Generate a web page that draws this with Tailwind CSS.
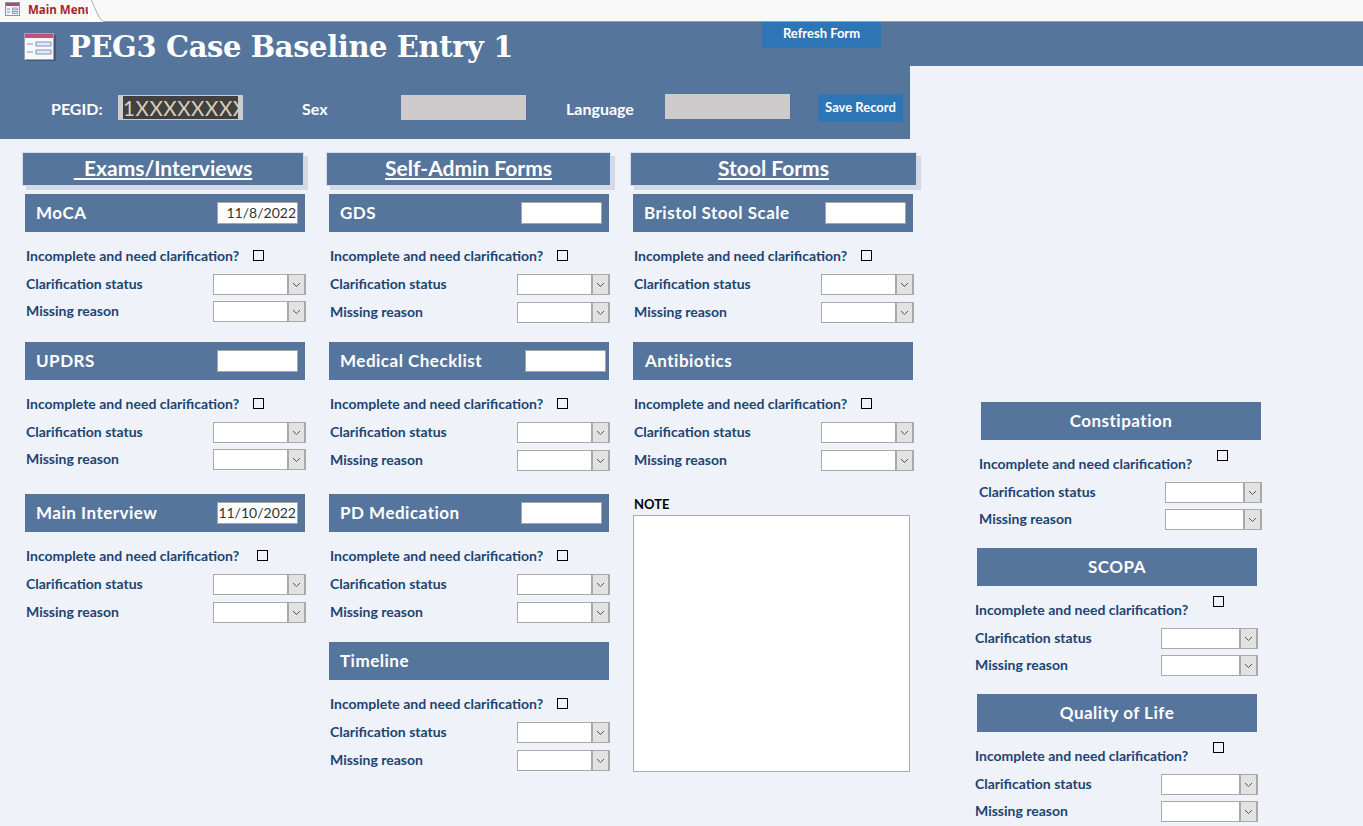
<!DOCTYPE html>
<html lang="en">

<head>
  <title>PEG3 Case Baseline Entry 1</title>
  <meta charset="UTF-8">
  <meta name="viewport" content="width=device-width, initial-scale=1">
  <script src="https://cdn.jsdelivr.net/npm/@tailwindcss/browser@4"></script>
</head>

<body class="bg-[#eff2f8] font-['Lato',sans-serif] h-[826px] overflow-hidden">
  <!-- tab strip -->
  <div class="h-[22px] bg-[#f8f8f8] border-b border-[#a0a0a0] flex relative">
    <svg class="absolute left-[5px] top-[2px]" width="15" height="14" viewBox="0 0 15 14">
      <rect x="0.5" y="0.5" width="14" height="13" fill="#f4f6fb" stroke="#8a93a8" />
      <rect x="1" y="1" width="13" height="3" fill="#b5476c" />
      <path d="M2 7h3M2 10h3" stroke="#7d8aa5" />
      <rect x="7.5" y="6" width="5" height="2" fill="#dce4f2" stroke="#6f80a5" stroke-width="0.7" />
      <rect x="7.5" y="9.5" width="5" height="2" fill="#dce4f2" stroke="#6f80a5" stroke-width="0.7" />
    </svg>
    <span class="ml-[28px] mt-[3px] text-[11.5px] leading-[14px] font-bold text-[#a4262c] font-['Open_Sans',sans-serif]">Main Menu</span>
    <svg class="absolute left-[88px] top-0" width="16" height="22" viewBox="0 0 16 22">
      <path d="M0 0h3C6 4 9 17 15 21.5H0z" fill="#fff" />
      <path d="M3 0C6 4 9 17 15 21.5" fill="none" stroke="#a8a8a8" />
    </svg>
    <div class="absolute left-0 top-[21px] w-[103px] h-px bg-white"></div>
  </div>

  <!-- title band -->
  <div class="h-[44px] bg-[#56759d] flex">
    <div class="w-[762px] shrink-0 flex">
      <svg class="ml-[24px] mt-[11px]" width="32" height="28" viewBox="0 0 32 28">
        <rect x="2" y="2" width="30" height="26" fill="#39455f" opacity="0.6" />
        <rect x="0.5" y="0.5" width="29" height="26" fill="#f7f8fc" stroke="#9aa3b5" />
        <rect x="1" y="1" width="28" height="4" fill="#c2517a" />
        <path d="M3 11h6M3 19h6" stroke="#7d93b8" />
        <rect x="12" y="9" width="15" height="4" fill="#e3eaf6" stroke="#7d93b8" />
        <rect x="12" y="17" width="15" height="4" fill="#e3eaf6" stroke="#7d93b8" />
      </svg>
      <h1 class="ml-[13px] mt-[6px] text-[29px] leading-[38px] font-bold text-white font-['DejaVu_Serif',serif] tracking-[-0.4px] whitespace-nowrap">PEG3 Case Baseline Entry 1</h1>
    </div>
    <div class="w-[119px] h-[26px] bg-[#2e75b6] text-white text-[13px] font-bold text-center leading-[23px]">Refresh Form</div>
  </div>

  <!-- record band -->
  <div class="w-[910px] h-[73px] bg-[#56759d] flex text-white font-bold text-[16px]">
    <span class="ml-[51px] w-[67px] mt-[32px] leading-[22px]">PEGID:</span>
    <div class="mt-[29px] w-[125px] h-[25px] bg-[#cdcbcb] px-[5px] py-px">
      <div class="h-[23px] bg-[#404040] text-[#d9cdb8] font-normal text-[20.5px] leading-[24px] tracking-[0.6px] overflow-hidden">1XXXXXXXX</div>
    </div>
    <span class="ml-[59px] w-[99px] mt-[32px] leading-[22px]">Sex</span>
    <div class="mt-[29px] w-[125px] h-[25px] bg-[#cdcbcb]"></div>
    <span class="ml-[40px] w-[99px] mt-[32px] leading-[22px]">Language</span>
    <div class="mt-[28px] w-[125px] h-[25px] bg-[#cdcbcb]"></div>
    <div class="ml-[28px] mt-[28px] w-[85px] h-[28px] bg-[#2e75b6] text-[13px] text-center leading-[27px]">Save Record</div>
  </div>

  <div class="flex pt-[13px] pl-[22px]">
    <!-- column 1 -->
    <div class="w-[304px] shrink-0">
      <div class="w-[282px] h-[34px] bg-[#56759d] border border-[#d4dbe8] shadow-[4px_4px_0_#d3dae6] text-white font-bold text-[21px] leading-[29px] text-center underline underline-offset-2 whitespace-pre">  Exams/Interviews</div>

      <div class="ml-[3px] mt-[8px]">
        <div class="w-[280px] h-[38px] bg-[#56759d] flex items-center justify-between pl-[11px] pr-[7px] text-white font-bold text-[17px] tracking-[0.5px]">
          <span>MoCA</span>
          <div class="w-[81px] h-[22px] bg-white border border-[#a6a6a6] text-[#333] font-normal text-[14px] leading-[20px] text-right pr-[1px] tracking-normal">11/8/2022</div>
        </div>
        <div class="mt-[9px] h-[28px] flex items-center text-[14px] font-bold text-[#1c4474]"><span class="w-[228px] pl-px whitespace-nowrap">Incomplete and need clarification?</span><div class="w-[11px] h-[11px] border border-black"></div></div>
        <div class="h-[28px] w-[281px] flex items-center justify-between text-[14px] font-bold text-[#1c4474]"><span class="pl-px">Clarification status</span><div class="mt-[3px] w-[93px] h-[21px] bg-white border border-[#a9a9a9] flex justify-end"><div class="w-[18px] h-full bg-[#e2e2e2] border-l-2 border-r border-[#a9a9a9] flex items-center justify-center"><svg width="9" height="6" viewBox="0 0 9 6"><path d="M1 1l3.5 3.5L8 1" fill="none" stroke="#555" /></svg></div></div></div>
        <div class="h-[27px] w-[281px] flex items-center justify-between text-[14px] font-bold text-[#1c4474]"><span class="pl-px">Missing reason</span><div class="mt-[2px] w-[93px] h-[21px] bg-white border border-[#a9a9a9] flex justify-end"><div class="w-[18px] h-full bg-[#e2e2e2] border-l-2 border-r border-[#a9a9a9] flex items-center justify-center"><svg width="9" height="6" viewBox="0 0 9 6"><path d="M1 1l3.5 3.5L8 1" fill="none" stroke="#555" /></svg></div></div></div>
      </div>

      <div class="ml-[3px] mt-[18px]">
        <div class="w-[280px] h-[38px] bg-[#56759d] flex items-center justify-between pl-[11px] pr-[7px] text-white font-bold text-[17px] tracking-[0.5px]">
          <span>UPDRS</span>
          <div class="w-[81px] h-[22px] bg-white border border-[#a6a6a6]"></div>
        </div>
        <div class="mt-[9px] h-[28px] flex items-center text-[14px] font-bold text-[#1c4474]"><span class="w-[228px] pl-px whitespace-nowrap">Incomplete and need clarification?</span><div class="w-[11px] h-[11px] border border-black"></div></div>
        <div class="h-[28px] w-[281px] flex items-center justify-between text-[14px] font-bold text-[#1c4474]"><span class="pl-px">Clarification status</span><div class="mt-[3px] w-[93px] h-[21px] bg-white border border-[#a9a9a9] flex justify-end"><div class="w-[18px] h-full bg-[#e2e2e2] border-l-2 border-r border-[#a9a9a9] flex items-center justify-center"><svg width="9" height="6" viewBox="0 0 9 6"><path d="M1 1l3.5 3.5L8 1" fill="none" stroke="#555" /></svg></div></div></div>
        <div class="h-[27px] w-[281px] flex items-center justify-between text-[14px] font-bold text-[#1c4474]"><span class="pl-px">Missing reason</span><div class="mt-[2px] w-[93px] h-[21px] bg-white border border-[#a9a9a9] flex justify-end"><div class="w-[18px] h-full bg-[#e2e2e2] border-l-2 border-r border-[#a9a9a9] flex items-center justify-center"><svg width="9" height="6" viewBox="0 0 9 6"><path d="M1 1l3.5 3.5L8 1" fill="none" stroke="#555" /></svg></div></div></div>
      </div>

      <div class="ml-[3px] mt-[22px]">
        <div class="w-[280px] h-[38px] bg-[#56759d] flex items-center justify-between pl-[11px] pr-[7px] text-white font-bold text-[17px] tracking-[0.5px]">
          <span>Main Interview</span>
          <div class="w-[81px] h-[22px] bg-white border border-[#a6a6a6] text-[#333] font-normal text-[14px] leading-[20px] text-right pr-[1px] tracking-normal">11/10/2022</div>
        </div>
        <div class="mt-[9px] h-[28px] flex items-center text-[14px] font-bold text-[#1c4474]"><span class="w-[232px] pl-px whitespace-nowrap">Incomplete and need clarification?</span><div class="w-[11px] h-[11px] border border-black"></div></div>
        <div class="h-[28px] w-[281px] flex items-center justify-between text-[14px] font-bold text-[#1c4474]"><span class="pl-px">Clarification status</span><div class="mt-[3px] w-[93px] h-[21px] bg-white border border-[#a9a9a9] flex justify-end"><div class="w-[18px] h-full bg-[#e2e2e2] border-l-2 border-r border-[#a9a9a9] flex items-center justify-center"><svg width="9" height="6" viewBox="0 0 9 6"><path d="M1 1l3.5 3.5L8 1" fill="none" stroke="#555" /></svg></div></div></div>
        <div class="h-[28px] w-[281px] flex items-center justify-between text-[14px] font-bold text-[#1c4474]"><span class="pl-px">Missing reason</span><div class="mt-[3px] w-[93px] h-[21px] bg-white border border-[#a9a9a9] flex justify-end"><div class="w-[18px] h-full bg-[#e2e2e2] border-l-2 border-r border-[#a9a9a9] flex items-center justify-center"><svg width="9" height="6" viewBox="0 0 9 6"><path d="M1 1l3.5 3.5L8 1" fill="none" stroke="#555" /></svg></div></div></div>
      </div>
    </div>

    <!-- column 2 -->
    <div class="w-[304px] shrink-0">
      <div class="w-[285px] h-[34px] bg-[#56759d] border border-[#d4dbe8] shadow-[4px_4px_0_#d3dae6] text-white font-bold text-[21px] leading-[29px] text-center underline underline-offset-2">Self-Admin Forms</div>

      <div class="ml-[3px] mt-[8px]">
        <div class="w-[280px] h-[38px] bg-[#56759d] flex items-center justify-between pl-[11px] pr-[7px] text-white font-bold text-[17px] tracking-[0.5px]">
          <span>GDS</span>
          <div class="w-[81px] h-[22px] bg-white border border-[#a6a6a6]"></div>
        </div>
        <div class="mt-[9px] h-[28px] flex items-center text-[14px] font-bold text-[#1c4474]"><span class="w-[228px] pl-px whitespace-nowrap">Incomplete and need clarification?</span><div class="w-[11px] h-[11px] border border-black"></div></div>
        <div class="h-[28px] w-[281px] flex items-center justify-between text-[14px] font-bold text-[#1c4474]"><span class="pl-px">Clarification status</span><div class="mt-[3px] w-[93px] h-[21px] bg-white border border-[#a9a9a9] flex justify-end"><div class="w-[18px] h-full bg-[#e2e2e2] border-l-2 border-r border-[#a9a9a9] flex items-center justify-center"><svg width="9" height="6" viewBox="0 0 9 6"><path d="M1 1l3.5 3.5L8 1" fill="none" stroke="#555" /></svg></div></div></div>
        <div class="h-[28px] w-[281px] flex items-center justify-between text-[14px] font-bold text-[#1c4474]"><span class="pl-px">Missing reason</span><div class="mt-[3px] w-[93px] h-[21px] bg-white border border-[#a9a9a9] flex justify-end"><div class="w-[18px] h-full bg-[#e2e2e2] border-l-2 border-r border-[#a9a9a9] flex items-center justify-center"><svg width="9" height="6" viewBox="0 0 9 6"><path d="M1 1l3.5 3.5L8 1" fill="none" stroke="#555" /></svg></div></div></div>
      </div>

      <div class="ml-[3px] mt-[17px]">
        <div class="w-[280px] h-[38px] bg-[#56759d] flex items-center justify-between pl-[11px] pr-[3px] text-white font-bold text-[17px] tracking-[0.5px]">
          <span>Medical Checklist</span>
          <div class="w-[81px] h-[22px] bg-white border border-[#a6a6a6]"></div>
        </div>
        <div class="mt-[9px] h-[28px] flex items-center text-[14px] font-bold text-[#1c4474]"><span class="w-[228px] pl-px whitespace-nowrap">Incomplete and need clarification?</span><div class="w-[11px] h-[11px] border border-black"></div></div>
        <div class="h-[28px] w-[281px] flex items-center justify-between text-[14px] font-bold text-[#1c4474]"><span class="pl-px">Clarification status</span><div class="mt-[3px] w-[93px] h-[21px] bg-white border border-[#a9a9a9] flex justify-end"><div class="w-[18px] h-full bg-[#e2e2e2] border-l-2 border-r border-[#a9a9a9] flex items-center justify-center"><svg width="9" height="6" viewBox="0 0 9 6"><path d="M1 1l3.5 3.5L8 1" fill="none" stroke="#555" /></svg></div></div></div>
        <div class="h-[28px] w-[281px] flex items-center justify-between text-[14px] font-bold text-[#1c4474]"><span class="pl-px">Missing reason</span><div class="mt-[3px] w-[93px] h-[21px] bg-white border border-[#a9a9a9] flex justify-end"><div class="w-[18px] h-full bg-[#e2e2e2] border-l-2 border-r border-[#a9a9a9] flex items-center justify-center"><svg width="9" height="6" viewBox="0 0 9 6"><path d="M1 1l3.5 3.5L8 1" fill="none" stroke="#555" /></svg></div></div></div>
      </div>

      <div class="ml-[3px] mt-[21px]">
        <div class="w-[280px] h-[38px] bg-[#56759d] flex items-center justify-between pl-[11px] pr-[7px] text-white font-bold text-[17px] tracking-[0.5px]">
          <span>PD Medication</span>
          <div class="w-[81px] h-[22px] bg-white border border-[#a6a6a6]"></div>
        </div>
        <div class="mt-[9px] h-[28px] flex items-center text-[14px] font-bold text-[#1c4474]"><span class="w-[228px] pl-px whitespace-nowrap">Incomplete and need clarification?</span><div class="w-[11px] h-[11px] border border-black"></div></div>
        <div class="h-[28px] w-[281px] flex items-center justify-between text-[14px] font-bold text-[#1c4474]"><span class="pl-px">Clarification status</span><div class="mt-[3px] w-[93px] h-[21px] bg-white border border-[#a9a9a9] flex justify-end"><div class="w-[18px] h-full bg-[#e2e2e2] border-l-2 border-r border-[#a9a9a9] flex items-center justify-center"><svg width="9" height="6" viewBox="0 0 9 6"><path d="M1 1l3.5 3.5L8 1" fill="none" stroke="#555" /></svg></div></div></div>
        <div class="h-[28px] w-[281px] flex items-center justify-between text-[14px] font-bold text-[#1c4474]"><span class="pl-px">Missing reason</span><div class="mt-[3px] w-[93px] h-[21px] bg-white border border-[#a9a9a9] flex justify-end"><div class="w-[18px] h-full bg-[#e2e2e2] border-l-2 border-r border-[#a9a9a9] flex items-center justify-center"><svg width="9" height="6" viewBox="0 0 9 6"><path d="M1 1l3.5 3.5L8 1" fill="none" stroke="#555" /></svg></div></div></div>
      </div>

      <div class="ml-[3px] mt-[17px]">
        <div class="w-[280px] h-[38px] bg-[#56759d] flex items-center pl-[11px] text-white font-bold text-[17px] tracking-[0.5px]">Timeline</div>
        <div class="mt-[9px] h-[28px] flex items-center text-[14px] font-bold text-[#1c4474]"><span class="w-[228px] pl-px whitespace-nowrap">Incomplete and need clarification?</span><div class="w-[11px] h-[11px] border border-black"></div></div>
        <div class="h-[28px] w-[281px] flex items-center justify-between text-[14px] font-bold text-[#1c4474]"><span class="pl-px">Clarification status</span><div class="mt-[3px] w-[93px] h-[21px] bg-white border border-[#a9a9a9] flex justify-end"><div class="w-[18px] h-full bg-[#e2e2e2] border-l-2 border-r border-[#a9a9a9] flex items-center justify-center"><svg width="9" height="6" viewBox="0 0 9 6"><path d="M1 1l3.5 3.5L8 1" fill="none" stroke="#555" /></svg></div></div></div>
        <div class="h-[28px] w-[281px] flex items-center justify-between text-[14px] font-bold text-[#1c4474]"><span class="pl-px">Missing reason</span><div class="mt-[3px] w-[93px] h-[21px] bg-white border border-[#a9a9a9] flex justify-end"><div class="w-[18px] h-full bg-[#e2e2e2] border-l-2 border-r border-[#a9a9a9] flex items-center justify-center"><svg width="9" height="6" viewBox="0 0 9 6"><path d="M1 1l3.5 3.5L8 1" fill="none" stroke="#555" /></svg></div></div></div>
      </div>
    </div>

    <!-- column 3 -->
    <div class="w-[347px] shrink-0">
      <div class="w-[287px] h-[34px] bg-[#56759d] border border-[#d4dbe8] shadow-[4px_4px_0_#d3dae6] text-white font-bold text-[21px] leading-[29px] text-center underline underline-offset-2">Stool Forms</div>

      <div class="ml-[3px] mt-[8px]">
        <div class="w-[280px] h-[38px] bg-[#56759d] flex items-center justify-between pl-[11px] pr-[7px] text-white font-bold text-[17px] tracking-[0.5px]">
          <span>Bristol Stool Scale</span>
          <div class="w-[81px] h-[22px] bg-white border border-[#a6a6a6]"></div>
        </div>
        <div class="mt-[9px] h-[28px] flex items-center text-[14px] font-bold text-[#1c4474]"><span class="w-[228px] pl-px whitespace-nowrap">Incomplete and need clarification?</span><div class="w-[11px] h-[11px] border border-black"></div></div>
        <div class="h-[28px] w-[281px] flex items-center justify-between text-[14px] font-bold text-[#1c4474]"><span class="pl-px">Clarification status</span><div class="mt-[3px] w-[93px] h-[21px] bg-white border border-[#a9a9a9] flex justify-end"><div class="w-[18px] h-full bg-[#e2e2e2] border-l-2 border-r border-[#a9a9a9] flex items-center justify-center"><svg width="9" height="6" viewBox="0 0 9 6"><path d="M1 1l3.5 3.5L8 1" fill="none" stroke="#555" /></svg></div></div></div>
        <div class="h-[28px] w-[281px] flex items-center justify-between text-[14px] font-bold text-[#1c4474]"><span class="pl-px">Missing reason</span><div class="mt-[3px] w-[93px] h-[21px] bg-white border border-[#a9a9a9] flex justify-end"><div class="w-[18px] h-full bg-[#e2e2e2] border-l-2 border-r border-[#a9a9a9] flex items-center justify-center"><svg width="9" height="6" viewBox="0 0 9 6"><path d="M1 1l3.5 3.5L8 1" fill="none" stroke="#555" /></svg></div></div></div>
      </div>

      <div class="ml-[3px] mt-[17px]">
        <div class="w-[280px] h-[38px] bg-[#56759d] flex items-center pl-[12px] text-white font-bold text-[17px] tracking-[0.5px]">Antibiotics</div>
        <div class="mt-[9px] h-[28px] flex items-center text-[14px] font-bold text-[#1c4474]"><span class="w-[228px] pl-px whitespace-nowrap">Incomplete and need clarification?</span><div class="w-[11px] h-[11px] border border-black"></div></div>
        <div class="h-[28px] w-[281px] flex items-center justify-between text-[14px] font-bold text-[#1c4474]"><span class="pl-px">Clarification status</span><div class="mt-[3px] w-[93px] h-[21px] bg-white border border-[#a9a9a9] flex justify-end"><div class="w-[18px] h-full bg-[#e2e2e2] border-l-2 border-r border-[#a9a9a9] flex items-center justify-center"><svg width="9" height="6" viewBox="0 0 9 6"><path d="M1 1l3.5 3.5L8 1" fill="none" stroke="#555" /></svg></div></div></div>
        <div class="h-[28px] w-[281px] flex items-center justify-between text-[14px] font-bold text-[#1c4474]"><span class="pl-px">Missing reason</span><div class="mt-[3px] w-[93px] h-[21px] bg-white border border-[#a9a9a9] flex justify-end"><div class="w-[18px] h-full bg-[#e2e2e2] border-l-2 border-r border-[#a9a9a9] flex items-center justify-center"><svg width="9" height="6" viewBox="0 0 9 6"><path d="M1 1l3.5 3.5L8 1" fill="none" stroke="#555" /></svg></div></div></div>
      </div>

      <div class="ml-[3px] mt-[23px] w-[277px]">
        <div class="pl-px h-[19px] text-[13px] leading-[16px] font-bold text-black">NOTE</div>
        <div class="h-[257px] bg-white border border-[#a9a9a9]"></div>
      </div>
    </div>

    <!-- right column -->
    <div class="w-[290px] shrink-0 pt-[250px]">
      <div>
        <div class="ml-[4px] w-[280px] h-[38px] bg-[#56759d] flex items-center justify-center text-white font-bold text-[17px] tracking-[0.5px]">Constipation</div>
        <div class="ml-px mt-[9px] h-[28px] flex items-center text-[14px] font-bold text-[#1c4474]"><span class="w-[239px] pl-px whitespace-nowrap">Incomplete and need clarification?</span><div class="mb-[16px] w-[11px] h-[11px] border border-black"></div></div>
        <div class="ml-px h-[28px] w-[284px] flex items-center justify-between text-[14px] font-bold text-[#1c4474]"><span class="pl-px">Clarification status</span><div class="mt-[3px] w-[97px] h-[21px] bg-white border border-[#a9a9a9] flex justify-end"><div class="w-[18px] h-full bg-[#e2e2e2] border-l-2 border-r border-[#a9a9a9] flex items-center justify-center"><svg width="9" height="6" viewBox="0 0 9 6"><path d="M1 1l3.5 3.5L8 1" fill="none" stroke="#555" /></svg></div></div></div>
        <div class="ml-px h-[27px] w-[284px] flex items-center justify-between text-[14px] font-bold text-[#1c4474]"><span class="pl-px">Missing reason</span><div class="mt-[2px] w-[97px] h-[21px] bg-white border border-[#a9a9a9] flex justify-end"><div class="w-[18px] h-full bg-[#e2e2e2] border-l-2 border-r border-[#a9a9a9] flex items-center justify-center"><svg width="9" height="6" viewBox="0 0 9 6"><path d="M1 1l3.5 3.5L8 1" fill="none" stroke="#555" /></svg></div></div></div>
      </div>

      <div class="mt-[16px]">
        <div class="w-[280px] h-[38px] bg-[#56759d] flex items-center justify-center text-white font-bold text-[17px] tracking-[0.5px]">SCOPA</div>
        <div class="-ml-[3px] mt-[9px] h-[28px] flex items-center text-[14px] font-bold text-[#1c4474]"><span class="w-[239px] pl-px whitespace-nowrap">Incomplete and need clarification?</span><div class="mb-[16px] w-[11px] h-[11px] border border-black"></div></div>
        <div class="-ml-[3px] h-[28px] w-[284px] flex items-center justify-between text-[14px] font-bold text-[#1c4474]"><span class="pl-px">Clarification status</span><div class="mt-[3px] w-[97px] h-[21px] bg-white border border-[#a9a9a9] flex justify-end"><div class="w-[18px] h-full bg-[#e2e2e2] border-l-2 border-r border-[#a9a9a9] flex items-center justify-center"><svg width="9" height="6" viewBox="0 0 9 6"><path d="M1 1l3.5 3.5L8 1" fill="none" stroke="#555" /></svg></div></div></div>
        <div class="-ml-[3px] h-[27px] w-[284px] flex items-center justify-between text-[14px] font-bold text-[#1c4474]"><span class="pl-px">Missing reason</span><div class="mt-[2px] w-[97px] h-[21px] bg-white border border-[#a9a9a9] flex justify-end"><div class="w-[18px] h-full bg-[#e2e2e2] border-l-2 border-r border-[#a9a9a9] flex items-center justify-center"><svg width="9" height="6" viewBox="0 0 9 6"><path d="M1 1l3.5 3.5L8 1" fill="none" stroke="#555" /></svg></div></div></div>
      </div>

      <div class="mt-[16px]">
        <div class="w-[280px] h-[38px] bg-[#56759d] flex items-center justify-center text-white font-bold text-[17px] tracking-[0.5px]">Quality of Life</div>
        <div class="-ml-[3px] mt-[9px] h-[28px] flex items-center text-[14px] font-bold text-[#1c4474]"><span class="w-[239px] pl-px whitespace-nowrap">Incomplete and need clarification?</span><div class="mb-[16px] w-[11px] h-[11px] border border-black"></div></div>
        <div class="-ml-[3px] h-[28px] w-[284px] flex items-center justify-between text-[14px] font-bold text-[#1c4474]"><span class="pl-px">Clarification status</span><div class="mt-[3px] w-[97px] h-[21px] bg-white border border-[#a9a9a9] flex justify-end"><div class="w-[18px] h-full bg-[#e2e2e2] border-l-2 border-r border-[#a9a9a9] flex items-center justify-center"><svg width="9" height="6" viewBox="0 0 9 6"><path d="M1 1l3.5 3.5L8 1" fill="none" stroke="#555" /></svg></div></div></div>
        <div class="-ml-[3px] h-[27px] w-[284px] flex items-center justify-between text-[14px] font-bold text-[#1c4474]"><span class="pl-px">Missing reason</span><div class="mt-[2px] w-[97px] h-[21px] bg-white border border-[#a9a9a9] flex justify-end"><div class="w-[18px] h-full bg-[#e2e2e2] border-l-2 border-r border-[#a9a9a9] flex items-center justify-center"><svg width="9" height="6" viewBox="0 0 9 6"><path d="M1 1l3.5 3.5L8 1" fill="none" stroke="#555" /></svg></div></div></div>
      </div>
    </div>
  </div>
</body>

</html>
